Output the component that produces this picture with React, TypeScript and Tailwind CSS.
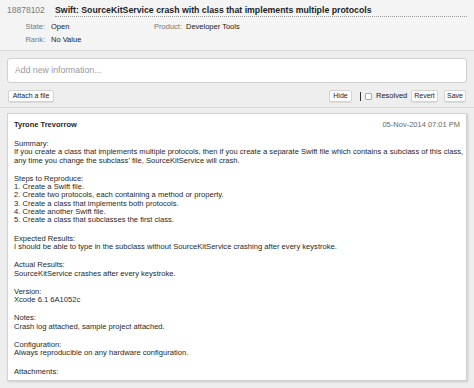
import clsx from 'clsx';

const sections: { title: string; lines: string[] }[] = [
  {
    title: 'Summary:',
    lines: [
      'If you create a class that implements multiple protocols, then if you create a separate Swift file which contains a subclass of this class,',
      "any time you change the subclass' file, SourceKitService will crash.",
    ],
  },
  {
    title: 'Steps to Reproduce:',
    lines: [
      '1. Create a Swift file.',
      '2. Create two protocols, each containing a method or property.',
      '3. Create a class that implements both protocols.',
      '4. Create another Swift file.',
      '5. Create a class that subclasses the first class.',
    ],
  },
  {
    title: 'Expected Results:',
    lines: ['I should be able to type in the subclass without SourceKitService crashing after every keystroke.'],
  },
  {
    title: 'Actual Results:',
    lines: ['SourceKitService crashes after every keystroke.'],
  },
  { title: 'Version:', lines: ['Xcode 6.1 6A1052c'] },
  { title: 'Notes:', lines: ['Crash log attached, sample project attached.'] },
  { title: 'Configuration:', lines: ['Always reproducible on any hardware configuration.'] },
  { title: 'Attachments:', lines: [] },
];

function SmallButton({ label, className }: { label: string; className?: string }) {
  return (
    <button
      className={clsx(
        'h-[12px] bg-white border border-[#d4d4d4] rounded-[2px] shadow-[0_1px_0_rgba(0,0,0,0.08)] text-[7px] leading-[10px] text-center text-[#222]',
        className
      )}
    >
      {label}
    </button>
  );
}

export default function App() {
  return (
    <div className="w-[474px] h-[388px] overflow-hidden bg-[#eeeeee] font-['Liberation_Sans',Arial,sans-serif] text-[#222]">
      {/* header */}
      <div className="bg-[#f4f4f4] border-b border-[#d9d9d9] h-[51px] pt-[3px]">
        <div className="flex items-center h-[15px] px-[7px]">
          <span className="w-[48px] text-[8.5px] text-[#7a7a7a]">18878102</span>
          <span className="flex-1 border-b border-dotted border-[#9a9a9a] text-[8.75px] font-bold leading-[12px] text-[#1e1e1e]">
            Swift: SourceKitService crash with class that implements multiple protocols
          </span>
        </div>
        <div className="flex items-center h-[13px] text-[7.5px] mt-[2px]">
          <span className="w-[45px] text-right text-[#777]">State:</span>
          <span className="w-[105px] pl-[6px] text-[#222]">Open</span>
          <span className="w-[32px] text-right text-[#777]">Product:</span>
          <span className="pl-[4px] text-[#222]">Developer Tools</span>
        </div>
        <div className="flex items-center h-[13px] text-[7.5px]">
          <span className="w-[45px] text-right text-[#777]">Rank:</span>
          <span className="pl-[6px] text-[#222]">No Value</span>
        </div>
      </div>

      {/* new info */}
      <div className="border-b border-[#dadada] h-[57px] pt-[7px]">
        <div className="mx-[7px] h-[25px] bg-white border border-[#cfcfcf] rounded-[3px] flex items-center pl-[7px] text-[8.7px] text-[#9a9a9a]">
          Add new information...
        </div>
        <div className="flex items-center mt-[7px] pl-[8px] pr-[8px]">
          <SmallButton label="Attach a file" className="w-[46px]" />
          <div className="flex-1" />
          <SmallButton label="Hide" className="w-[23px]" />
          <div className="w-[1px] h-[9px] bg-[#333] ml-[8px] mr-[4px]" />
          <div className="w-[7px] h-[7px] bg-white border border-[#aaa] rounded-[1px]" />
          <span className="ml-[4px] w-[31px] text-[7.5px] text-[#222]">Resolved</span>
          <SmallButton label="Revert" className="ml-[4px] w-[27px]" />
          <SmallButton label="Save" className="ml-[6px] w-[22px]" />
        </div>
      </div>

      {/* comment card */}
      <div className="mx-[7px] mt-[5px] h-[268px] bg-white border border-[#d2d2d2] shadow-[1px_1px_2px_rgba(0,0,0,0.15)] px-[6px] pt-[6px]">
        <div className="flex items-center justify-between h-[10px] text-[7.5px]">
          <span className="font-bold text-[#1e1e1e]">Tyrone Trevorrow</span>
          <span className="text-[#666]">05-Nov-2014 07:01 PM</span>
        </div>
        <div className="mt-[10px] text-[7.6px] leading-[8.3px] text-[#1f1f1f]">
          {sections.map((s) => (
            <div key={s.title} className="mb-[10px]">
              <div>{s.title}</div>
              {s.lines.map((l) => (
                <div key={l} className="whitespace-nowrap">
                  {l}
                </div>
              ))}
            </div>
          ))}
        </div>
      </div>
    </div>
  );
}
